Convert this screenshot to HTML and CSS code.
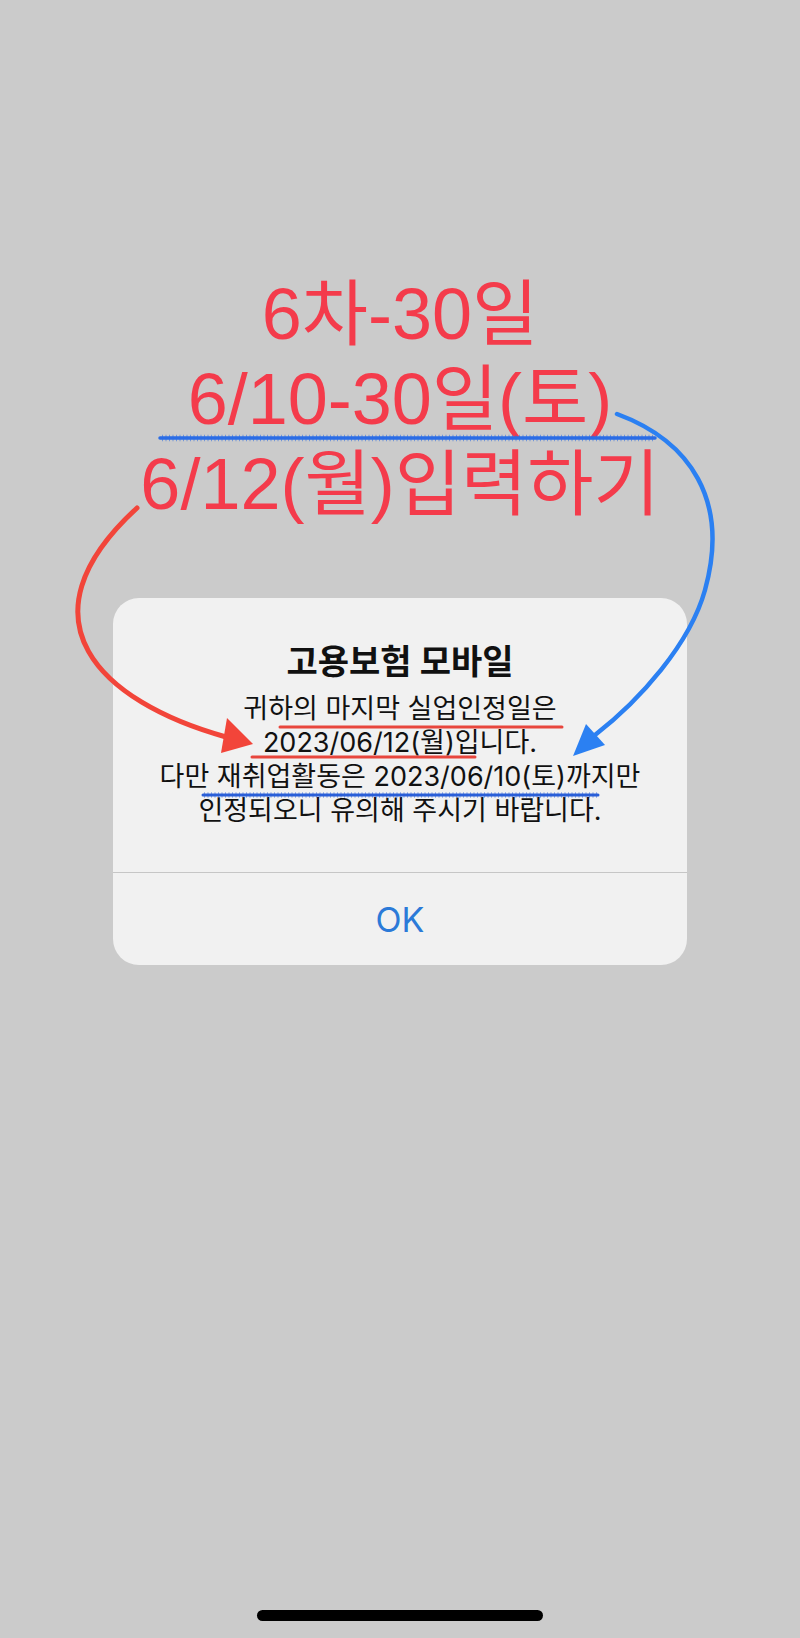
FILE: index.html
```html
<!DOCTYPE html>
<html lang="ko">
<head>
<meta charset="utf-8">
<title>고용보험 모바일</title>
<link rel="stylesheet" href="styles.css">
</head>
<body>
<div class="screen">
  <div class="note">
    <p class="note-line">6차-30일</p>
    <p class="note-line">6/10-30일(토)</p>
    <p class="note-line">6/12(월)입력하기</p>
  </div>
  <div class="alert">
    <div class="alert-body">
      <h1 class="alert-title">고용보험 모바일</h1>
      <p class="alert-msg">귀하의 마지막 실업인정일은<br>2023/06/12(월)입니다.<br>다만 재취업활동은 2023/06/10(토)까지만<br>인정되오니 유의해 주시기 바랍니다.</p>
    </div>
    <div class="alert-actions"><button class="alert-btn">OK</button></div>
  </div>
  <div class="home-indicator"></div>
  <svg class="marks" viewBox="0 0 800 1638" width="800" height="1638" aria-hidden="true">
    <line x1="160" y1="438" x2="655" y2="438" stroke="#2a6ce6" stroke-width="3.5" stroke-linecap="round"/>
    <line x1="162" y1="438" x2="653" y2="438" stroke="#2a6ce6" stroke-width="6.5" stroke-dasharray="1 2.5" opacity="0.55"/>
    <path d="M617 414 C690 441 730 500 705 590 C690 644 640 700 595 735" fill="none" stroke="#2b80f2" stroke-width="4.5" stroke-linecap="round"/>
    <polygon points="573,756 586,724 605,745" fill="#2b80f2"/>
    <path d="M137 508 C15 620 100 702 226 737" fill="none" stroke="#f2453a" stroke-width="5" stroke-linecap="round"/>
    <polygon points="253,744 227,718 221,753" fill="#f2453a"/>
    <line x1="280" y1="727" x2="562" y2="727" stroke="#e8463d" stroke-width="3" stroke-linecap="round"/>
    <line x1="252" y1="757" x2="475" y2="757" stroke="#e8463d" stroke-width="3" stroke-linecap="round"/>
    <line x1="203" y1="795" x2="598" y2="795" stroke="#2a5fd8" stroke-width="3" stroke-linecap="round"/>
    <line x1="204" y1="795" x2="597" y2="795" stroke="#2a5fd8" stroke-width="5.5" stroke-dasharray="1 2.5" opacity="0.5"/>
  </svg>
</div>
</body>
</html>
```

FILE: styles.css
```css
html, body {
  margin: 0;
  padding: 0;
}

body {
  background: #cbcbcb;
}

.screen {
  position: relative;
  width: 800px;
  height: 1638px;
  display: flex;
  flex-direction: column;
  align-items: center;
  background: #cbcbcb;
  overflow: hidden;
}

.note {
  padding-top: 272px;
  text-align: center;
  color: #f43b4b;
  font-family: "Liberation Sans", "Noto Sans CJK KR", sans-serif;
  font-size: 72px;
  line-height: 85px;
}

.note-line {
  margin: 0;
  white-space: nowrap;
}

.alert {
  margin-top: 71px;
  width: 574px;
  background: #f1f1f1;
  border-radius: 26px;
  overflow: hidden;
}

.alert-body {
  padding: 44px 16px;
  text-align: center;
}

.alert-title {
  margin: 0;
  font-family: "Inter", "Noto Sans CJK KR", sans-serif;
  font-weight: 700;
  font-size: 34px;
  line-height: 40px;
  color: #111111;
}

.alert-msg {
  margin: 10px 0 0;
  font-family: "Inter", "Noto Sans CJK KR", sans-serif;
  font-size: 27px;
  line-height: 34px;
  color: #111111;
  white-space: nowrap;
}

.alert-actions {
  display: flex;
  height: 92px;
  border-top: 1px solid #c6c6c6;
}

.alert-btn {
  flex: 1;
  padding: 0;
  border: 0;
  background: transparent;
  font-family: "Inter", "Liberation Sans", sans-serif;
  font-size: 34px;
  color: #2b7ad8;
}

.home-indicator {
  margin-top: auto;
  margin-bottom: 17px;
  width: 286px;
  height: 11px;
  border-radius: 6px;
  background: #000000;
}

.marks {
  position: absolute;
  left: 0;
  top: 0;
  width: 800px;
  height: 1638px;
  pointer-events: none;
}
```
